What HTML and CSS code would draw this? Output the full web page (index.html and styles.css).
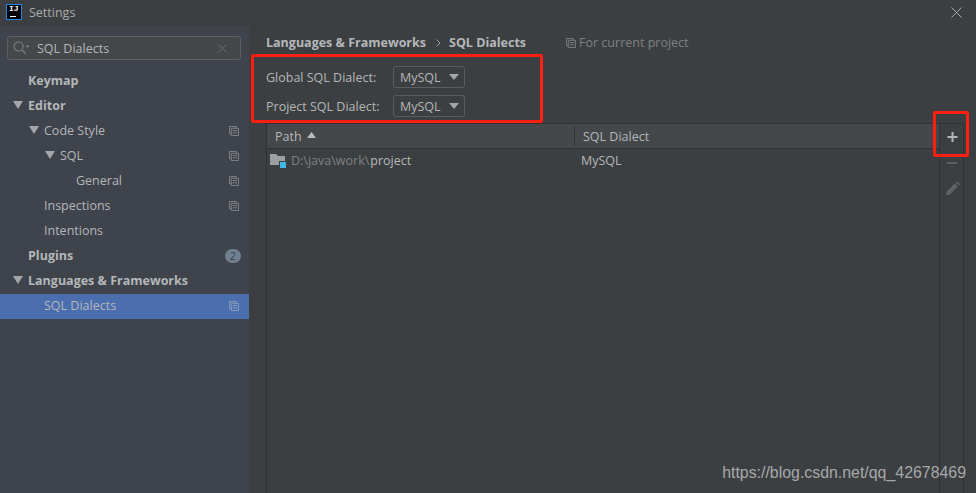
FILE: index.html
```html
<!DOCTYPE html>
<html lang="en">
<head>
<meta charset="utf-8">
<title>Settings</title>
<link rel="stylesheet" href="styles.css">
</head>
<body>
<svg width="0" height="0" class="defs">
  <symbol id="copy" viewBox="0 0 11 11">
    <path d="M2.500 8.500H.5V.5H8V2.500" fill="none" stroke="currentColor"/>
    <path d="M2.500 2.500h8v8h-8z M4 5h5M4 7.500h5" fill="none" stroke="currentColor"/>
  </symbol>
  <symbol id="tri" viewBox="0 0 10 8" preserveAspectRatio="none"><path d="M0 0h10L5 8z" fill="currentColor"/></symbol>
</svg>
<div class="window">
  <header class="titlebar">
    <span class="logo"><span class="logo-text">IJ</span><span class="logo-bar"></span></span>
    <span class="title">Settings</span>
    <svg class="close" width="11" height="11" viewBox="0 0 11 11"><path d="M.5.5l10 10M10.500.5l-10 10" stroke="#a9acae" stroke-width="1"/></svg>
  </header>
  <div class="main">
    <aside class="sidebar">
      <div class="search">
        <svg class="search-icon" width="17" height="14" viewBox="0 0 17 14"><circle cx="5.500" cy="5.500" r="4.500" fill="none" stroke="#7d8083" stroke-width="1.200"/><path d="M9 9l3.500 3.500" stroke="#7d8083" stroke-width="1.300"/><path d="M12.500 4.500h4l-2 2.500z" fill="#7d8083"/></svg>
        <span class="search-text">SQL Dialects</span>
        <svg class="search-clear" width="9" height="9" viewBox="0 0 9 9"><path d="M.5.5l8 8M8.500.5l-8 8" stroke="#6d7073"/></svg>
      </div>
      <nav class="tree">
        <div class="row l0 bold"><span class="label">Keymap</span></div>
        <div class="row l0 bold"><svg class="arrow"><use href="#tri"/></svg><span class="label">Editor</span></div>
        <div class="row l1"><svg class="arrow"><use href="#tri"/></svg><span class="label">Code Style</span><svg class="copy"><use href="#copy"/></svg></div>
        <div class="row l2"><svg class="arrow"><use href="#tri"/></svg><span class="label">SQL</span><svg class="copy"><use href="#copy"/></svg></div>
        <div class="row l3"><span class="label">General</span><svg class="copy"><use href="#copy"/></svg></div>
        <div class="row l1"><span class="label">Inspections</span><svg class="copy"><use href="#copy"/></svg></div>
        <div class="row l1"><span class="label">Intentions</span></div>
        <div class="row l0 bold"><span class="label">Plugins</span><span class="badge">2</span></div>
        <div class="row l0 bold"><svg class="arrow"><use href="#tri"/></svg><span class="label">Languages &amp; Frameworks</span></div>
        <div class="row l1 selected"><span class="label">SQL Dialects</span><svg class="copy"><use href="#copy"/></svg></div>
      </nav>
    </aside>
    <section class="content">
      <div class="crumbs">
        <span class="crumb">Languages &amp; Frameworks</span>
        <svg class="crumb-sep" width="5" height="8" viewBox="0 0 5 8"><path d="M.5.5L4 4 .5 7.500" fill="none" stroke="#9a9d9f"/></svg>
        <span class="crumb">SQL Dialects</span>
        <span class="scope"><svg class="copy scope-icon"><use href="#copy"/></svg>For current project</span>
      </div>
      <div class="form">
        <div class="field"><span class="field-label">Global SQL Dialect:</span><span class="combo">MySQL<svg class="combo-arrow"><use href="#tri"/></svg></span></div>
        <div class="field"><span class="field-label">Project SQL Dialect:</span><span class="combo">MySQL<svg class="combo-arrow"><use href="#tri"/></svg></span></div>
      </div>
      <div class="table-wrap">
        <div class="table">
          <div class="thead">
            <div class="th th-path">Path<svg class="sort" width="9" height="6" viewBox="0 0 9 6"><path d="M0 6h9L4.500 0z" fill="#bbb"/></svg></div>
            <div class="th th-dialect">SQL Dialect</div>
          </div>
          <div class="tr">
            <div class="td td-path">
              <svg class="folder" width="16" height="15" viewBox="0 0 16 15"><path d="M0 1h6l2 2h7v9H0z" fill="#9da0a3"/><rect x="9" y="8" width="7" height="7" fill="#3c3f41"/><rect x="10" y="9" width="6" height="6" fill="#40b6e0"/></svg>
              <span class="dim">D:\java\work\</span><span class="path-name">project</span>
            </div>
            <div class="td td-dialect">MySQL</div>
          </div>
        </div>
        <div class="toolbar">
          <svg width="25" height="26" viewBox="0 0 25 26"><path d="M12.500 8v10M7.500 13h10" stroke="#b4b6b8" stroke-width="2"/></svg>
          <svg width="25" height="25" viewBox="0 0 25 25"><path d="M7 13h10" stroke="#5f6264" stroke-width="2"/></svg>
          <svg width="25" height="25" viewBox="0 0 25 25"><path d="M6 20l.8-3.600 8-8 3 3-8 8z M15.800 7.400l1.200-1.200 3 3-1.200 1.200z" fill="#5f6264"/></svg>
        </div>
      </div>
    </section>
  </div>
</div>
<div class="mark mark-form"></div>
<div class="mark mark-add"></div>
<div class="watermark">https://blog.csdn.net/qq_42678469</div>
</body>
</html>
```
FILE: styles.css
```css
* { box-sizing: border-box; }
html, body { margin: 0; height: 100%; }
body { position: relative; width: 976px; height: 493px; overflow: hidden; background: #3c3f41; font-family: "Open Sans", "Noto Sans", sans-serif; font-size: 12.5px; color: #b4b7b9; }
.defs { position: absolute; }
.window { display: flex; flex-direction: column; height: 493px; }
.titlebar { height: 26px; flex: none; display: flex; align-items: center; padding: 0 14px 0 6px; background: #3c3f41; }
.logo { position: relative; width: 16px; height: 16px; background: #000; border: 1px solid #1e88e5; margin-top: -2px; }
.logo-text { position: absolute; left: 2px; top: -2px; font: bold 8px/12px "Liberation Mono", monospace; color: #fff; letter-spacing: 0; }
.logo-bar { position: absolute; left: 3px; bottom: 2px; width: 6px; height: 1px; background: #fff; }
.title { margin-left: 7px; color: #a9acae; flex: 1; margin-top: -1px; }
.close { flex: none; margin-top: -2px; }
.main { flex: 1; display: flex; min-height: 0; }
.sidebar { width: 249px; flex: none; background: #3e434c; padding-top: 10px; }
.search { height: 24px; margin: 0 8px 0 7px; display: flex; align-items: center; padding: 0 13px 0 5px; background: #45484a; border: 1px solid #5e6060; border-radius: 2px; }
.search-icon { flex: none; margin-right: 7px; }
.search-text { flex: 1; }
.search-clear { flex: none; }
.tree { margin-top: 9px; }
.row { height: 25px; display: flex; align-items: center; position: relative; padding: 0 10px 2px 0; }
.row .label { flex: 1; white-space: nowrap; }
.l0 { padding-left: 28px; }
.l1 { padding-left: 44px; }
.l2 { padding-left: 60px; }
.l3 { padding-left: 76px; }
.bold { font-weight: 700; }
.arrow { position: absolute; width: 10px; height: 8px; top: 7px; color: #a4a7aa; }
.l0 .arrow { left: 13px; }
.l1 .arrow { left: 29px; }
.l2 .arrow { left: 45px; }
.copy { width: 10px; height: 10px; flex: none; color: #85888b; }
.selected { background: #4b6eaf; }
.selected .copy { color: #8fa0bd; }
.badge { width: 16px; height: 14px; margin-right: -2px; border-radius: 8px; background: #6e7f8f; color: #3e434c; font-size: 11px; line-height: 14px; text-align: center; font-weight: 400; }
.content { flex: 1; min-width: 0; display: flex; flex-direction: column; padding: 0 12px 0 17px; background: #3c3f41; }
.crumbs { height: 33px; display: flex; align-items: center; flex: none; }
.crumb { font-weight: 700; }
.crumb-sep { margin: 0 8px 0 10px; }
.scope { display: flex; align-items: center; margin-left: 40px; color: #7e8183; }
.scope-icon { margin-right: 3px; width: 10px; height: 10px; color: #7e8183; }
.form { flex: none; padding-top: 7px; }
.field { display: flex; align-items: center; height: 22px; margin-bottom: 7px; }
.field-label { width: 127px; }
.combo { width: 72px; height: 22px; display: flex; align-items: center; justify-content: space-between; padding: 0 5px 0 6px; border: 1px solid #5a5d5f; border-radius: 3px; background: #3c3f41; }
.combo-arrow { width: 10px; height: 6px; color: #a4a7aa; }
.table-wrap { flex: 1; display: flex; margin-top: -1px; min-height: 0; border-top: 1px solid #323232; }
.table { flex: 1; border-left: 1px solid #323232; min-width: 0; }
.thead { display: flex; height: 25px; background: #45484a; border-bottom: 1px solid #323232; }
.th { display: flex; align-items: center; }
.th-path { width: 308px; padding-left: 8px; position: relative; }
.th-path::after { content: ""; position: absolute; right: 0; top: 2px; bottom: 2px; width: 1px; background: #323232; }
.sort { margin-left: 5px; margin-top: -3px; }
.th-dialect { padding-left: 8px; flex: 1; }
.tr { display: flex; height: 24px; align-items: center; padding-bottom: 2px; }
.td-path { width: 308px; padding-left: 3px; display: flex; align-items: center; }
.td-dialect { padding-left: 6px; }
.folder { margin-right: 5px; flex: none; }
.dim { color: #7e8183; }
.path-name { margin-left: 1px; }
.toolbar { width: 25px; flex: none; display: flex; flex-direction: column; border-left: 1px solid #323232; border-right: 1px solid #323232; }
.toolbar svg { flex: none; }
.mark { position: absolute; border: 3px solid #ff1f12; border-radius: 2px; }
.mark-form { left: 251px; top: 54px; width: 292px; height: 69px; }
.mark-add { left: 933px; top: 111px; width: 36px; height: 46px; }
.watermark { position: absolute; right: 10px; top: 464px; font-family: "Liberation Sans", Arial, sans-serif; font-size: 15.9px; color: #a6a8a9; }
```
